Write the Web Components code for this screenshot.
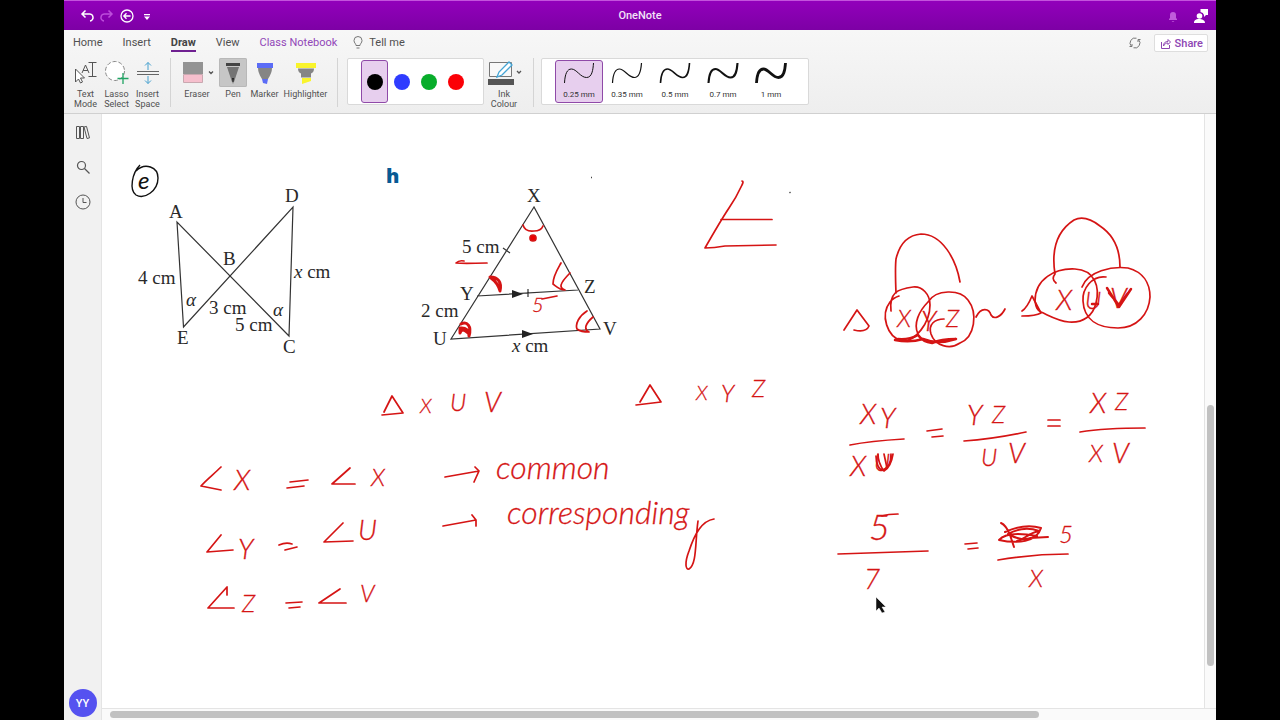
<!DOCTYPE html>
<html lang="en">
<head>
<meta charset="utf-8">
<title>OneNote</title>
<style>
  html, body { margin: 0; height: 100%; background: #000; }
  body { font-family: Roboto, "Liberation Sans", sans-serif; font-size: 11px; color: #505050; }
</style>
</head>
<body>
<note-app>
  <title-bar slot="title">OneNote</title-bar>
  <ribbon-bar slot="ribbon"></ribbon-bar>
  <nav-rail slot="rail" initials="YY"></nav-rail>
  <ink-page slot="page"></ink-page>
</note-app>

<script>
const define = (name, html, setup) => {
  const template = document.createElement('template');
  template.innerHTML = html;
  customElements.define(name, class extends HTMLElement {
    constructor() {
      super();
      this.attachShadow({ mode: 'open' }).append(template.content.cloneNode(true));
    }
    connectedCallback() { if (setup) setup(this, this.shadowRoot); }
  });
};

define('note-app', `
  <style>
    :host { display: grid; grid-template: auto auto minmax(0, 1fr) / 38px minmax(0, 1fr);
      height: 100vh; margin: 0 5%; background: #fff; overflow: hidden; }
    ::slotted(*) { min-width: 0; min-height: 0; }
  </style>
  <slot name="title"></slot>
  <slot name="ribbon"></slot>
  <slot name="rail"></slot>
  <slot name="page"></slot>
`);

define('title-bar', `
  <style>
    :host { grid-column: 1 / -1; display: grid; grid-template-columns: 1fr auto 1fr; align-items: center;
      height: 30px; box-sizing: border-box; border-top: 1px solid #c353dd;
      background: linear-gradient(#9200bb, #7d00a5); color: #f3e2f8; font-weight: 500; }
    div { display: flex; align-items: center; }
    .left { padding-left: 16px; gap: 6px; }
    .right { justify-content: flex-end; padding-right: 7px; gap: 14px; }
    button { display: flex; padding: 0; border: 0; background: none; color: #fff; }
  </style>
  <div class="left">
    <button aria-label="Undo"><svg width="14" height="14" fill="none" stroke="#fff" stroke-width="1.5"><path d="M5.5 1.500 2 5l3.500 3.500M2 5h7a3.500 3.500 0 0 1 1 7"/></svg></button>
    <button aria-label="Redo"><svg width="14" height="14" fill="none" stroke="#bd4ddb" stroke-width="1.5"><path d="M8.500 1.500 12 5 8.500 8.500M12 5H5a3.500 3.500 0 0 0-1 7"/></svg></button>
    <button aria-label="Back"><svg width="14" height="14" fill="none" stroke="#fff" stroke-width="1.3"><circle cx="7" cy="7" r="6"/><path d="M10.500 7H4M6.500 4.300 3.800 7l2.700 2.700"/></svg></button>
    <button aria-label="Customise toolbar"><svg width="14" height="14"><path d="M4 5h6v1.300H4zM4 7.500h6L7 11z" fill="#fff"/></svg></button>
  </div>
  <slot></slot>
  <div class="right">
    <button aria-label="Notifications"><svg width="12" height="12" fill="#c05cdb"><path d="M2 10V9l1-1V5a3 3 0 0 1 6 0v3l1 1v1zM4.500 11h3l-1.500 1z"/></svg></button>
    <button aria-label="Feedback"><svg width="16" height="16" fill="#fff"><path d="M7.500 1H15v6h-2l-2 2V7a4 4 0 0 0-3.500-3zM1 15c0-3 2-4 5-4s6 1 6 4z"/><circle cx="6.500" cy="8" r="2.800"/></svg></button>
  </div>
`);

define('ribbon-tab', `
  <style>
    :host { display: block; }
    a { display: block; height: 14px; padding-top: 5px; line-height: 13px; color: inherit; text-decoration: none;
      border-bottom: 2px solid transparent; }
    :host([current]) a { border-color: #6f2091; font-weight: 700; color: #444; }
    :host([accent]) a { color: #9146b8; }
  </style>
  <a href="#"><slot></slot></a>
`);

define('tool-button', `
  <style>
    :host { display: block; }
    button { display: block; width: 100%; padding: 0; border: 0; background: none; font: inherit; color: inherit; }
    .icon { display: flex; justify-content: center; align-items: center; height: 29px; border-radius: 2px; }
    :host([pressed]) .icon { background: #c6c6c6; box-shadow: inset 0 0 0 1px #b8b8b8; }
    .label { display: block; margin-top: 2px; font-size: 9px; line-height: 10px; text-align: center; }
  </style>
  <button><span class="icon"><slot name="icon"></slot></span><span class="label"><slot></slot></span></button>
`);

define('pen-colours', `
  <style>
    :host { display: flex; box-sizing: border-box; width: 137px; height: 47px; padding: 1px 13px; background: #fff; border: 1px solid #d9d9d9; border-radius: 2px; }
    label { display: flex; align-items: center; justify-content: center; width: 27px; box-sizing: border-box; border: 1px solid transparent; border-radius: 3px; }
    label:has(:checked) { background: #e7cfee; border-color: #8f4aa8; }
    input { appearance: none; width: 16px; height: 16px; margin: 0; border-radius: 50%; background: var(--ink); }
  </style>
  <label style="--ink:#000"><input type="radio" name="ink" aria-label="Black" checked></label>
  <label style="--ink:#2f3cff"><input type="radio" name="ink" aria-label="Blue"></label>
  <label style="--ink:#08ad2b"><input type="radio" name="ink" aria-label="Green"></label>
  <label style="--ink:#fb0007"><input type="radio" name="ink" aria-label="Red"></label>
`);

define('pen-widths', `
  <style>
    :host { display: flex; box-sizing: border-box; width: 268px; height: 47px; padding: 1px 13px; background: #fff; border: 1px solid #d9d9d9; border-radius: 2px; }
    label { display: flex; flex-direction: column; align-items: center; width: 48px; box-sizing: border-box; padding-top: 1px;
      border: 1px solid transparent; border-radius: 3px; font-size: 8px; line-height: 10px; color: #333; }
    label:has(:checked) { background: #e7cfee; border-color: #8f4aa8; }
    input { appearance: none; margin: 0; width: 0; height: 0; }
    svg { margin-bottom: 5px; }
  </style>
`, (host, root) => {
  [['0.25 mm', 1], ['0.35 mm', 1.2], ['0.5 mm', 1.6], ['0.7 mm', 2.1], ['1 mm', 2.8]].forEach(([name, w], i) => {
    root.innerHTML += `<label><input type="radio" name="width" ${i ? '' : 'checked'}>
      <svg width="32" height="23" fill="none" stroke="#111" stroke-width="${w}"><path d="M1.500 21C2 12 4 7 8.500 7c5 0 9 8.500 15 8.500C29 15.500 30 8 30.500 1"/></svg>${name}</label>`;
  });
});

define('ribbon-bar', `
  <style>
    :host { grid-column: 1 / -1; display: block; height: 84px; box-sizing: border-box; background: linear-gradient(#f7f7f7, #eee); border-bottom: 1px solid #d0d0d0; }
    nav { display: flex; align-items: flex-start; padding: 1px 8px 0 9px; height: 27px; box-sizing: border-box; }
    ribbon-tab { margin-right: 20px; }
    .tell { display: flex; gap: 6px; padding: 5px 0 0; margin-left: -4px; border: 0; background: none; font: inherit; color: inherit; line-height: 13px; }
    .end { display: flex; align-items: center; gap: 13px; margin-left: auto; padding-top: 3px; }
    .end button { display: flex; align-items: center; padding: 0; border: 0; background: none; }
    .end .share { gap: 4px; height: 18px; padding: 0 4px 0 6px; border: 1px solid #dedede; border-radius: 2px; background: #fff; color: #8d45b3; font: 500 11px Roboto, sans-serif; }
    .tools { display: flex; align-items: flex-start; padding: 1px 6px 0; }
    hr { width: 1px; height: 49px; margin: 0 9px 0 7px; border: 0; background: #d4d4d4; }
    tool-button { width: 31px; }
    .eraser { width: 34px; } .pen { width: 28px; margin: 0 2px 0 5px; } .high { width: 49px; margin-left: 1px; }
    .ink { width: 40px; margin-right: 2px; } svg { flex: none; }
    pen-widths { margin-left: -2px; }
  </style>
  <nav>
    <ribbon-tab>Home</ribbon-tab><ribbon-tab>Insert</ribbon-tab><ribbon-tab current>Draw</ribbon-tab><ribbon-tab>View</ribbon-tab><ribbon-tab accent>Class Notebook</ribbon-tab>
    <button class="tell"><svg width="10" height="13" fill="none" stroke="#777"><path d="M3 9.500C3 7.500 1 7 1 4.500a4 4 0 0 1 8 0C9 7 7 7.500 7 9.500zM3.500 12h3"/></svg>Tell me</button>
    <div class="end">
      <button aria-label="Sync"><svg width="12" height="12" fill="none" stroke="#777"><path d="M2.500 9.500A5 5 0 0 1 7.500 1.200M9.500 2.500a5 5 0 0 1-5 8.300M.5 9.500h2.500V7M11.500 2.500H9V5"/></svg></button>
      <button class="share"><svg width="10" height="11" fill="none" stroke="#8d45b3"><path d="M.5 4v6.500h8V7M2.500 8c0-3 1.500-4.500 4.500-4.500V1.500L9.500 4 7 6.500V5C5 5 3.500 6 2.500 8z"/></svg>Share</button>
    </div>
  </nav>
  <div class="tools">
    <tool-button><svg slot="icon" width="24" height="24" fill="none" stroke="#555"><path d="M1.500 8v13l3-3 2 4 2-1-2-4h4z" fill="#fff"/><path d="m8 12 3.500-8L15 12M9 9.500h5M14.500 1.500h8M18.500 1.500v14M14.500 15.500h8"/></svg>Text<br>Mode</tool-button>
    <tool-button><svg slot="icon" width="25" height="25" fill="none"><circle cx="11" cy="11" r="9.500" fill="#fff" stroke="#888" stroke-dasharray="4 2"/><path d="M19 13v11M13.500 18.500h11" stroke="#1fa463" stroke-width="1.300"/></svg>Lasso<br>Select</tool-button>
    <tool-button><svg slot="icon" width="24" height="24" fill="none"><path d="M1 10.500h22M1 13.500h22" stroke="#666"/><path d="M12 9V1.500M9 4.500l3-3 3 3M12 15v7.500M9 19.500l3 3 3-3" stroke="#45a0cf"/></svg>Insert<br>Space</tool-button>
    <hr>
    <tool-button class="eraser"><svg slot="icon" width="34" height="21" viewBox="-3 0 34 21"><path d="M0 0h20v12H0z" fill="#939393"/><path d="M.5 12.500h19v8H.5z" fill="#f6bfcd" stroke="#c9a8b0"/><path d="m26 9.500 2 2 2-2" fill="none" stroke="#555" stroke-width="1.300"/></svg>Eraser</tool-button>
    <tool-button class="pen" pressed><svg slot="icon" width="18" height="22"><path d="M2 1h14v3H2z" fill="#444"/><path d="M3 5h12L10 20H8z" fill="#737373"/><path d="M8 16h2l-1 6z" fill="#222"/></svg>Pen</tool-button>
    <tool-button><svg slot="icon" width="18" height="22"><path d="M1 1h16v5H1z" fill="#5b6cf6"/><path d="M2 6h14q0 5-4 11H6Q2 11 2 6z" fill="#858585"/><path d="M6 17h6l-1 5-4-1z" fill="#5b6cf6"/></svg>Marker</tool-button>
    <tool-button class="high"><svg slot="icon" width="20" height="22"><path d="M0 1h20v5H0z" fill="#f9f42c"/><path d="M2 6.500h16q0 4-3 5v4H5v-4q-3-1-3-5z" fill="#858585"/><path d="M6 16h9v3l-9 3z" fill="#f9f42c"/></svg>Highlighter</tool-button>
    <hr>
    <pen-colours></pen-colours>
    <tool-button class="ink"><svg slot="icon" width="36" height="26"><path d="M3.500 2.500h22v14h-22z" fill="#f8f8f8" stroke="#777"/><path d="m11 17 2-5L23 2l3 3-10 10z" fill="#fff" stroke="#45a5d5" stroke-width="1.300"/><path d="M2 19h26v6H2z" fill="#555"/><path d="m31 11 2 2 2-2" fill="none" stroke="#555" stroke-width="1.300"/></svg>Ink<br>Colour</tool-button>
    <hr>
    <pen-widths></pen-widths>
  </div>
`);

define('nav-rail', `
  <style>
    :host { display: flex; flex-direction: column; align-items: center; box-sizing: border-box; padding: 10px 0 3px; gap: 19px; background: #f1f1f1; border-right: 1px solid #e4e4e4; }
    button { display: flex; padding: 0; border: 0; background: none; }
    .avatar { justify-content: center; align-items: center; width: 28px; height: 28px; margin-top: auto; border-radius: 50%; background: #5552f0; color: #fff; font: 500 11px Roboto, sans-serif; }
  </style>
  <button aria-label="Notebooks"><svg width="16" height="16" fill="none" stroke="#555"><path d="M1.500 2.500h3v12h-3zM5.500 2.500h3v12h-3zM9 3l2.500-.6 3 11.500-2.500.6z"/></svg></button>
  <button aria-label="Search"><svg width="16" height="16" fill="none" stroke="#555" stroke-width="1.200"><circle cx="6.500" cy="6.500" r="4"/><path d="m9.500 9.500 5 5"/></svg></button>
  <button aria-label="Recent"><svg width="16" height="16" fill="none" stroke="#555"><circle cx="8" cy="8" r="7"/><path d="M8 4v4.500h3.500"/></svg></button>
  <button class="avatar" aria-label="Account"></button>
`, (host, root) => { root.querySelector('.avatar').textContent = host.getAttribute('initials'); });

/* Handwritten notes: [text, x, baseline, size] on the free canvas. */
const notes = [
  ['X', 420, 413, 20], ['U', 450, 411, 24], ['V', 484, 412, 28],
  ['X', 696, 400, 20], ['Y', 721, 402, 24], ['Z', 752, 397, 24],
  ['X', 234, 490, 28], ['X', 371, 486, 24], ['common', 496, 479, 32],
  ['Y', 238, 559, 28], ['U', 358, 540, 28], ['corresponding', 507, 524, 32],
  ['Z', 242, 612, 24], ['V', 360, 602, 24],
  ['X', 860, 424, 28], ['Y', 880, 428, 28], ['X', 850, 476, 28], ['U', 874, 471, 24],
  ['Y', 967, 425, 28], ['Z', 992, 423, 24], ['U', 981, 466, 24], ['V', 1008, 463, 28],
  ['X', 1090, 413, 28], ['Z', 1115, 410, 24], ['X', 1089, 462, 24], ['V', 1112, 463, 28],
  ['5', 869, 540, 36], ['7', 864, 589, 28], ['5', 1059, 543, 24], ['X', 1029, 587, 24],
  ['X', 897, 327, 24], ['Y', 921, 331, 28], ['Z', 946, 327, 24],
  ['X', 1056, 310, 28], ['U', 1085, 309, 24], ['V', 1110, 308, 28], ['5', 532, 312, 20]
];
/* Printed labels of the two exercise figures. */
const labels = [
  ['A', 169, 218], ['D', 285, 202], ['B', 223, 265], ['E', 177, 344], ['C', 283, 353],
  ['4 cm', 138, 284], ['3 cm', 209, 314], ['5 cm', 235, 331], ['X', 527, 202],
  ['5 cm', 462, 253], ['2 cm', 421, 317], ['Y', 460, 300], ['Z', 584, 293], ['U', 433, 345], ['V', 603, 335]
];

define('ink-page', `
  <style>
    :host { display: grid; grid-template: minmax(0, 1fr) 12px / minmax(0, 1fr) 12px; background: #fff; }
    .sheet { display: block; width: 100%; height: 100%; overflow: hidden; }
    .v, .h { background: #fafafa; display: flex; box-sizing: border-box; }
    .v { border-left: 1px solid #e4e4e4; flex-direction: column; align-items: center; }
    .h { grid-column: 1 / -1; border-top: 1px solid #e4e4e4; align-items: center; padding-left: 8px; }
    i { background: #c1c1c1; border-radius: 4px; }
    .v i { width: 7px; height: 44%; } .v::before { content: ""; height: 49%; }
    .h i { height: 7px; width: 84%; }
    .ink { fill: none; stroke: #d51414; stroke-width: 1.700; stroke-linecap: round; stroke-linejoin: round; }
    .notes { fill: #d51414; font-family: Lato, sans-serif; font-weight: 300; font-style: italic; stroke: #d51414; stroke-width: .3; }
    .print { fill: #292929; font: 19px "Liberation Serif", serif; }
    .figure { fill: none; stroke: #333; stroke-width: 1.200; }
  </style>
  <svg class="sheet" role="img" aria-label="Similar triangles worked example">
    <g transform="translate(-102 -114)">
      <path class="figure" d="M177 222 183.500 327 293 207 289 336ZM534 207 451 339 600 329ZM477 296 578 290M503 248l7 5M528 289v8"/>
      <path d="m512 290 11 4-11 4zM522 330l11 4-11 4z" fill="#222"/>
      <g class="print" id="labels">
        <text x="186" y="306" font-style="italic">α</text><text x="273" y="316" font-style="italic">α</text>
        <text x="294" y="278"><tspan font-style="italic">x</tspan> cm</text>
        <text x="512" y="352"><tspan font-style="italic">x</tspan> cm</text>
      </g>
      <text x="386" y="183" fill="#075a94" style="font:800 20px 'Open Sans',sans-serif">h</text>
      <text x="138" y="189" fill="#111" style="font:italic 24px Lato,sans-serif">e</text>
      <path d="M140 165c-8 8-11 25-4 30 8 5 22-4 22-17 0-11-13-16-22-7" fill="none" stroke="#111" stroke-width="1.400"/>
      <path d="M591 177.500h1M789.500 193l1-1" stroke="#444" stroke-width="1.300"/>
      <g class="ink">
        <path d="M742 181q2 0 0 4-6 13-13 23-8 12-24 40 9 0 20-2l51-1M721 219.500l51 0"/>
        <path d="M523 225q2 7 11 6 7 0 9-5M487 263c-12 0-20 1-31 0q3-3 8-2M561 263c-4 7-8 13-8 21 4 3 7 6 12 6-6-2-6-6 5-17M587 311c-8 5-12 13-10 18 4 3 8 3 12 3-6-3-3-9 4-15"/>
        <path d="M490 277c8 0 12 5 10 14q-2-8-9-13M461 324c6-3 11 2 8 12q0-9-9-8v5q2-6 8 0" stroke-width="3"/>
        <path d="m542 299 15-3"/>
        <circle cx="533" cy="238" r="3" fill="#e00"/>
        <path d="M844 330l13-20 12 16q-3 7-15 4"/>
        <path d="M896 293q-1-25 0-34c4-17 13-24 25-25 21 0 35 25 39 48"/>
        <path d="M891 311c-2-18 6-22 22-24 9-1 17 7 17 18 0 18-15 37-28 36-15-4-22-26-12-39q3-4 9-6M918 334c-5-10 1-23 10-32 8-13 32-13 40-2 10 13 7 37-8 43-10 7-25 3-29-9-3-10 4-15 13-15"/>
        <path d="M895 340q15 3 28-1 14 6 33 0-15 0-24 4-9-1-14-8-9 5-20 4" stroke-width="2.500"/>
        <path d="M976 317c5-10 13-9 15-2 3 5 10 2 14-6"/>
        <path d="M1022 311q5-3 10-15l9 17q-5 3-19 3"/>
        <path d="M1056 283q-5-4-1-9-6-38 19-54c8-4 17-1 26 6 15 10 20 24 20 41"/>
        <path d="M1035 301c0-22 20-33 40-32 20 1 25 18 21 34-3 13-13 20-27 19-11-1-19-6-28-10-4-2-5-5-6-11M1082 287c6-16 30-21 46-19 15 4 22 15 22 29-1 17-13 31-32 31-20 0-34-8-35-27-1-12 9-26 23-24"/>
        <path d="M1107 288l12 19 12-18M1109 293l10 12 9-12M1092 304h6" stroke-width="2.500"/>
        <path d="M384 412l8-16 11 17-21 2M640 402l10-17 11 17-25 3"/>
        <path d="M221 467c-7 7-15 13-20 19l20 4M350 468l-18 16 23 0M221 535l-14 17 26-2M343 523l-19 19 29-1M227 587l-19 21 26 0M227 587v8M340 589l-21 14 27 0"/>
        <path d="M290 482l18-2M287 488l17-2M279 545q7-3 13-1M285 550l12-3M286 603l16-1M289 608l11-1"/>
        <path d="M445 477l34-6-4-4M479 471l-5 11M443 526l33-6-4-5M476 520l0 6"/>
        <path d="M714 519c-12 2-19 14-25 32-5 13-3 19 0 18 8-5 6-27 9-48"/>
        <path d="M850 445q20-4 54-6M964 441q30-2 62-9M1080 432q25-4 65-4M838 554l90-3M998 560q35-6 70-6"/>
        <path d="M927 431l15-2M932 437l11-1M1048 420h12M1048 426h12M965 544l12-1M968 549l10-1"/>
        <path d="M876 456c0 8 3 14 7 14 6-2 8-8 8-16M878 454q0 9 6 17 7-4 9-17M884 454l3 14"/>
        <path d="M882 516q6-2 16-2"/>
        <path d="M1001 523q5 2 9 12l4 12M1005 532q20-9 36-4c-4 14-24 16-42 12 6-7 22-7 38-4-10 5-18 4-29-2 11-6 20-7 31-3-10 2-14 8-22 10M1030 538l18-1" stroke-width="2"/>
      </g>
      <g class="notes" id="notes"></g>
      <path d="M876 597v14l3-3 3 5 3-1-3-5h4z" fill="#111" stroke="#fff" stroke-width=".5"/>
    </g>
  </svg>
  <div class="v"><i></i></div>
  <div class="h"><i></i></div>
`, (host, root) => {
  const put = (group, [text, x, y, size]) => {
    const node = document.createElementNS('http://www.w3.org/2000/svg', 'text');
    node.setAttribute('x', x);
    node.setAttribute('y', y);
    if (size) node.setAttribute('font-size', size);
    node.textContent = text;
    root.getElementById(group).append(node);
  };
  notes.forEach(n => put('notes', n));
  labels.forEach(l => put('labels', l));
});
</script>
</body>
</html>
